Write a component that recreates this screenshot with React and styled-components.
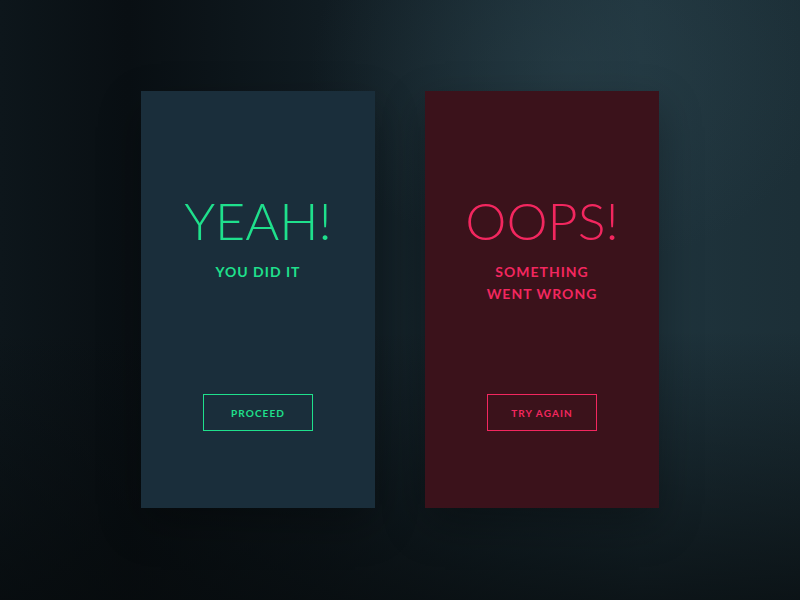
import React from 'react';
import styled, { createGlobalStyle } from 'styled-components';

const GlobalStyle = createGlobalStyle`
  html, body, #root { margin: 0; height: 100%; }
  body {
    font-family: Lato, "Open Sans", sans-serif;
    background:
      radial-gradient(ellipse 260px 200px at 570px 70px, rgba(46, 70, 80, 0.45), transparent 100%),
      linear-gradient(to bottom, transparent 0%, transparent 55%, rgba(6, 10, 12, 0.75) 100%),
      linear-gradient(to right, #0d161b 0%, #090f13 16%, #101b21 40%, #1a2c34 65%, #1f343d 80%, #1c2f37 100%);
    background-color: #0b1216;
  }
`;

const Stage = styled.div`
  height: 600px;
  display: flex;
  justify-content: center;
  align-items: flex-start;
  gap: 50px;
  padding-top: 91px;
  box-sizing: border-box;
`;

const Card = styled.div`
  width: 234px;
  height: 417px;
  box-sizing: border-box;
  background: ${({ bg }) => bg};
  color: ${({ accent }) => accent};
  display: flex;
  flex-direction: column;
  align-items: center;
  padding: 101px 0 77px;
  box-shadow: 0 16px 40px rgba(0, 0, 0, 0.3);
`;

const Headline = styled.h1`
  margin: 0;
  font-family: Lato, sans-serif;
  font-weight: 300;
  font-size: 52px;
  line-height: 56px;
  letter-spacing: 0;
`;

const Subtitle = styled.p`
  margin: 13px 0 0;
  font-family: Lato, sans-serif;
  font-weight: 700;
  font-size: 14px;
  line-height: 22px;
  letter-spacing: 1px;
  text-align: center;
`;

const Button = styled.button`
  margin-top: auto;
  width: 110px;
  height: 37px;
  background: transparent;
  border: 1px solid ${({ accent }) => accent};
  color: ${({ accent }) => accent};
  font-family: Lato, sans-serif;
  font-weight: 700;
  font-size: 10px;
  letter-spacing: 1.1px;
  cursor: pointer;
`;

const cards = [
  { title: 'YEAH!', lines: ['YOU DID IT'], action: 'PROCEED', bg: '#1a2e3b', accent: '#1fe08c' },
  { title: 'OOPS!', lines: ['SOMETHING', 'WENT WRONG'], action: 'TRY AGAIN', bg: '#3b121b', accent: '#f2275f' },
];

export default function App() {
  return (
    <>
      <GlobalStyle />
      <Stage>
        {cards.map(card => (
          <Card key={card.title} bg={card.bg} accent={card.accent}>
            <Headline>{card.title}</Headline>
            <Subtitle>
              {card.lines.map((line, i) => (
                <React.Fragment key={line}>
                  {i > 0 && <br />}
                  {line}
                </React.Fragment>
              ))}
            </Subtitle>
            <Button accent={card.accent}>{card.action}</Button>
          </Card>
        ))}
      </Stage>
    </>
  );
}
